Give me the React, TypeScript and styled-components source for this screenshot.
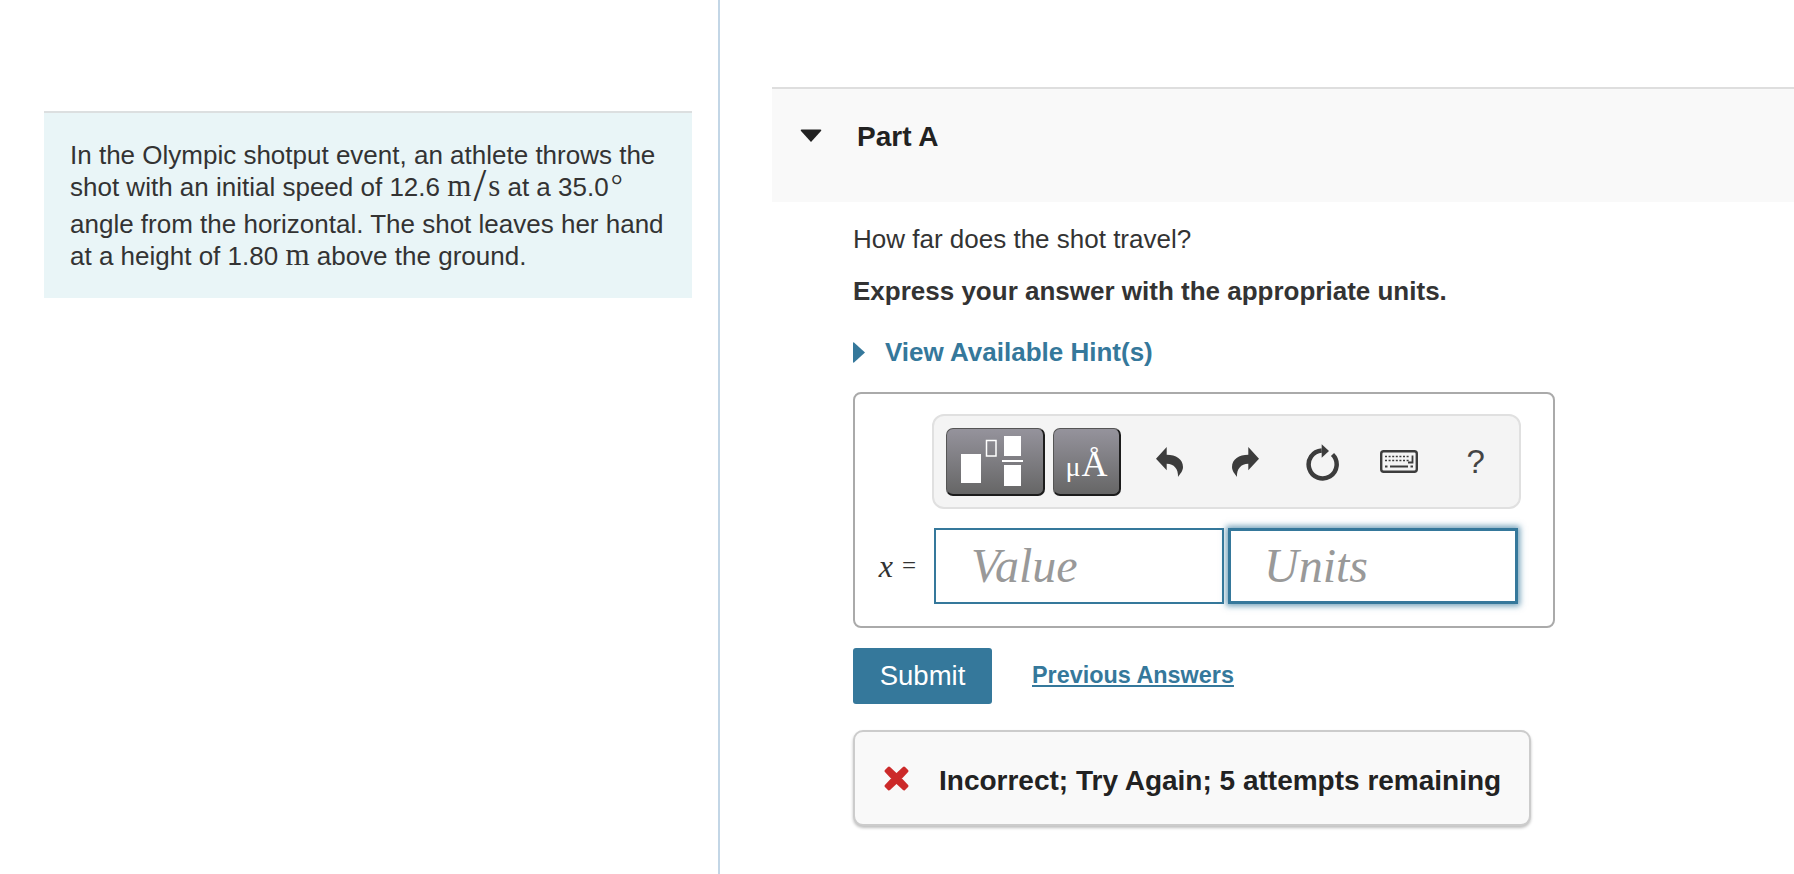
import styled, { createGlobalStyle } from "styled-components";

const GlobalStyle = createGlobalStyle`
  html, body {
    margin: 0;
    padding: 0;
    height: 100%;
    overflow: hidden;
    background: #fff;
    font-family: "Liberation Sans", Arial, sans-serif;
    color: #333;
  }
`;

const Page = styled.div`
  display: flex;
  height: 874px;
`;

const LeftPane = styled.div`
  box-sizing: border-box;
  width: 720px;
  flex-shrink: 0;
  padding: 111px 26px 0 44px;
  border-right: 2px solid #c3d6e6;
`;

const Intro = styled.div`
  box-sizing: border-box;
  height: 187px;
  padding: 26px 0 0 26px;
  background: #e9f5f7;
  border-top: 2px solid #dcdfe0;
  font-size: 26px;
  color: #333;
  white-space: nowrap;
`;

const IntroLine = styled.div<{ $tall?: boolean }>`
  height: 32px;
  line-height: 32px;
  margin-bottom: ${(p) => (p.$tall ? "5px" : "0")};
`;

const Unit = styled.span`
  font-family: "Liberation Serif", serif;
  font-size: 31px;
  line-height: 0;
`;

const Slash = styled.span`
  margin: 0 2px;
  font-family: "Liberation Serif", serif;
  font-size: 46px;
  font-weight: 400;
  line-height: 0;
  vertical-align: -5px;
`;

const Degree = styled.span`
  margin-left: 2px;
  font-family: "Liberation Serif", serif;
  font-size: 30px;
  line-height: 0;
  vertical-align: 1px;
`;

const RightPane = styled.div`
  flex: 1;
  padding: 87px 0 0 52px;
`;

const PartHeader = styled.div`
  box-sizing: border-box;
  height: 115px;
  display: flex;
  padding: 32px 0 0 28px;
  background: #f9f9f9;
  border-top: 2px solid #dedede;
`;

const PartArrow = styled.svg`
  margin-top: 8px;
`;

const PartTitle = styled.h2`
  margin: 0 0 0 35px;
  font-size: 28px;
  line-height: 32px;
  font-weight: 700;
  color: #222;
`;

const PartBody = styled.div`
  padding: 21px 0 0 81px;
`;

const Question = styled.p`
  margin: 0;
  font-size: 26px;
  line-height: 32px;
  color: #333;
`;

const Instruction = styled(Question)`
  margin-top: 20px;
  font-weight: 700;
`;

const HintRow = styled.div`
  display: flex;
  align-items: center;
  gap: 20px;
  margin-top: 29px;
  height: 32px;
  font-size: 26px;
  font-weight: 700;
  color: #35789b;
`;

const AnswerBox = styled.div`
  box-sizing: border-box;
  width: 702px;
  height: 236px;
  margin-top: 24px;
  padding: 20px 0 0 20px;
  border: 2px solid #aaa;
  border-radius: 8px;
`;

const Toolbar = styled.div`
  box-sizing: border-box;
  display: flex;
  align-items: center;
  width: 589px;
  height: 95px;
  margin-left: 57px;
  padding: 0 12px;
  gap: 8px;
  background: #f4f4f4;
  border: 2px solid #e0e0e0;
  border-radius: 12px;
`;

const PaletteButton = styled.div<{ $width: number }>`
  box-sizing: border-box;
  width: ${(p) => p.$width}px;
  height: 68px;
  flex-shrink: 0;
  display: flex;
  align-items: center;
  justify-content: center;
  background: linear-gradient(#95939c, #666);
  border: 1px solid #555;
  border-bottom: 2px solid #1c1c1c;
  border-right: 2px solid #1c1c1c;
  border-radius: 7px;
`;

const TemplateIcon = styled.svg`
  margin-right: 7px;
`;

const UnitsGlyph = styled.span`
  font-family: "Liberation Serif", serif;
  font-size: 36px;
  line-height: 1;
  margin-top: 6px;
  color: #fff;
`;

const MicroGlyph = styled.span`
  font-size: 28px;
  margin-right: 1px;
`;

const ToolIcons = styled.div`
  display: grid;
  grid-template-columns: repeat(5, 76.6px);
  justify-items: center;
  align-items: center;
  margin-left: 2px;
`;

const HelpMark = styled.span`
  font-size: 33px;
  line-height: 40px;
  color: #444;
`;

const InputRow = styled.div`
  display: flex;
  align-items: center;
  margin-top: 19px;
`;

const Variable = styled.span`
  box-sizing: border-box;
  display: flex;
  align-items: center;
  justify-content: flex-end;
  gap: 9px;
  width: 59px;
  flex-shrink: 0;
  padding-right: 18px;
  font-family: "Liberation Serif", serif;
  font-size: 25px;
  color: #333;
`;

const VariableName = styled.i`
  font-size: 32px;
  line-height: 1;
`;

const AnswerInput = styled.div<{ $focused?: boolean }>`
  box-sizing: border-box;
  width: 290px;
  height: 76px;
  margin-right: 4px;
  padding-left: ${(p) => (p.$focused ? "33px" : "35px")};
  border: ${(p) => (p.$focused ? "3px" : "2px")} solid #35789b;
  box-shadow: ${(p) => (p.$focused ? "0 0 6px 2px rgba(53, 120, 155, 0.7)" : "none")};
  font-family: "Liberation Serif", serif;
  font-style: italic;
  font-size: 48px;
  line-height: ${(p) => (p.$focused ? "70px" : "72px")};
  color: #999;
`;

const ActionRow = styled.div`
  display: flex;
  align-items: center;
  margin-top: 20px;
`;

const SubmitButton = styled.button`
  width: 139px;
  height: 56px;
  padding: 0;
  border: 0;
  border-radius: 3px;
  background: #35789b;
  color: #fff;
  font-family: inherit;
  font-size: 27.5px;
`;

const PreviousLink = styled.a`
  margin-left: 40px;
  margin-bottom: 2px;
  font-size: 23.4px;
  font-weight: 700;
  color: #35789b;
  text-decoration: underline;
`;

const Feedback = styled.div`
  box-sizing: border-box;
  display: flex;
  align-items: center;
  gap: 29px;
  width: 678px;
  height: 96px;
  margin-top: 26px;
  padding: 6px 0 0 28px;
  background: #f9f9f9;
  border: 2px solid #ccc;
  border-radius: 10px;
  box-shadow: 0 2px 3px rgba(0, 0, 0, 0.25);
  font-size: 28px;
  font-weight: 700;
  color: #222;
  white-space: nowrap;
`;

const CrossIcon = styled.svg`
  margin-top: -6px;
`;

const App = () => (
  <>
    <GlobalStyle />
    <Page>
      <LeftPane>
        <Intro>
          <IntroLine>In the Olympic shotput event, an athlete throws the</IntroLine>
          <IntroLine $tall>
            shot with an initial speed of 12.6 <Unit>m</Unit>
            <Slash>/</Slash>
            <Unit>s</Unit> at a 35.0<Degree>°</Degree>
          </IntroLine>
          <IntroLine>angle from the horizontal. The shot leaves her hand</IntroLine>
          <IntroLine>
            at a height of 1.80 <Unit>m</Unit> above the ground.
          </IntroLine>
        </Intro>
      </LeftPane>
      <RightPane>
        <PartHeader>
          <PartArrow width="22" height="13" viewBox="0 0 22 13">
            <path d="M1.500 0.500H20.500Q22 0.500 21 2L11 13L1 2Q0 0.500 1.500 0.500Z" fill="#222" />
          </PartArrow>
          <PartTitle>Part A</PartTitle>
        </PartHeader>
        <PartBody>
          <Question>How far does the shot travel?</Question>
          <Instruction>Express your answer with the appropriate units.</Instruction>
          <HintRow>
            <svg width="12" height="21" viewBox="0 0 12 21">
              <path d="M0 1Q0 0 1 0.500L12 10.500L1 20.500Q0 21 0 20Z" fill="#35789b" />
            </svg>
            View Available Hint(s)
          </HintRow>
          <AnswerBox>
            <Toolbar>
              <PaletteButton $width={99}>
                <TemplateIcon width="62" height="50" viewBox="0 0 62 50">
                  <path d="M0 18H20V47H0Z" fill="#fff" />
                  <path d="M25.500 4.500H35V20H25.500Z" fill="none" stroke="#fff" strokeWidth="1.500" />
                  <path d="M43 0H60V20H43ZM41 24H62V26H41ZM43 29H60V50H43Z" fill="#fff" />
                </TemplateIcon>
              </PaletteButton>
              <PaletteButton $width={68}>
                <UnitsGlyph>
                  <MicroGlyph>μ</MicroGlyph>Å
                </UnitsGlyph>
              </PaletteButton>
              <ToolIcons>
                <svg width="27" height="30" viewBox="0 0 27 30">
                  <path d="M0 11.700L10.700 0V7.700C20 7.700 27 12 27 20C27 24 24 27 22 30C22.500 22 18 16.700 10.700 16.700V23.300Z" fill="#3c3c3c" />
                </svg>
                <svg width="27" height="30" viewBox="0 0 27 30">
                  <path d="M27 11.700L16.300 0V7.700C7 7.700 0 12 0 20C0 24 3 27 5 30C4.500 22 9 16.700 16.300 16.700V23.300Z" fill="#3c3c3c" />
                </svg>
                <svg width="34" height="38" viewBox="0 0 34 38">
                  <path d="M27.500 11.500A14 14 0 1 1 16.700 7.500" fill="none" stroke="#3c3c3c" strokeWidth="4.500" />
                  <path d="M16.700 1.300L24 8L16.700 14.700Z" fill="#3c3c3c" />
                </svg>
                <svg width="38" height="23" viewBox="0 0 38 23">
                  <rect x="1.200" y="1.200" width="35.600" height="20.600" rx="2.500" fill="none" stroke="#3c3c3c" strokeWidth="2.400" />
                  <path d="M5 6.500H30M5 10.500H30" stroke="#3c3c3c" strokeWidth="1.700" strokeDasharray="2 1.600" />
                  <path d="M32.500 5.500V12.500H28" fill="none" stroke="#3c3c3c" strokeWidth="1.800" />
                  <path d="M5 16.500H7.500M10 16.500H28M30.500 16.500H33" stroke="#3c3c3c" strokeWidth="1.800" />
                </svg>
                <HelpMark>?</HelpMark>
              </ToolIcons>
            </Toolbar>
            <InputRow>
              <Variable>
                <VariableName>x</VariableName>=
              </Variable>
              <AnswerInput>Value</AnswerInput>
              <AnswerInput $focused>Units</AnswerInput>
            </InputRow>
          </AnswerBox>
          <ActionRow>
            <SubmitButton>Submit</SubmitButton>
            <PreviousLink>Previous Answers</PreviousLink>
          </ActionRow>
          <Feedback>
            <CrossIcon width="27" height="27" viewBox="0 0 27 27">
              <path d="M3 6L6 3L13.500 10L21 3L24 6L17 13.500L24 21L21 24L13.500 17L6 24L3 21L10 13.500Z" fill="#cc2a2a" stroke="#cc2a2a" strokeWidth="3" strokeLinejoin="round" />
            </CrossIcon>
            Incorrect; Try Again; 5 attempts remaining
          </Feedback>
        </PartBody>
      </RightPane>
    </Page>
  </>
);

export default App;
